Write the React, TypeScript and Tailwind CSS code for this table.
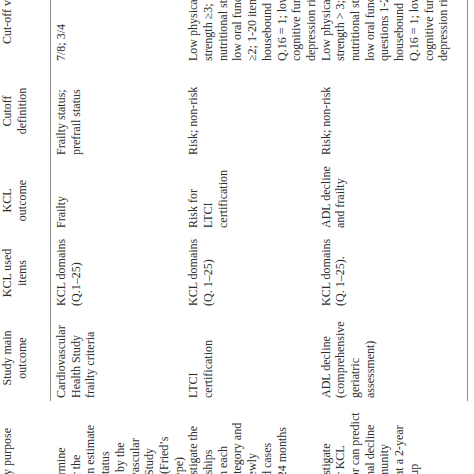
const HEADERS: string[][] = [
  ['Study purpose'],
  ['Study main', 'outcome'],
  ['KCL used', 'items'],
  ['KCL', 'outcome'],
  ['Cutoff', 'definition'],
  ['Cut-off value'],
]

const ROWS: string[][][] = [
  [
    ['To determine', 'whether the', 'KCL can estimate', 'frailty status', 'defined by the', 'Cardiovascular', 'Health Study', 'criteria (Fried\u2019s', 'phenotype)'],
    ['Cardiovascular', 'Health Study', 'frailty criteria'],
    ['KCL domains', '(Q.1\u201325)'],
    ['Frailty'],
    ['Frailty status;', 'prefrail status'],
    ['7/8; 3/4'],
  ],
  [
    ['To investigate the', 'relationships', 'between each', 'KCL category and', 'LTCI newly', 'certified cases', 'within 24 months'],
    ['LTCI', 'certification'],
    ['KCL domains', '(Q. 1\u201325)'],
    ['Risk for', 'LTCI', 'certification'],
    ['Risk; non-risk'],
    ['Low physical', 'strength \u22653;', 'nutritional status', 'low oral function', '\u22652; 1-20 items', 'housebound', 'Q.16 = 1; low', 'cognitive function', 'depression risk'],
  ],
  [
    ['To investigate', 'whether KCL', 'indicator can predict', 'functional decline', 'in community', 'people at a 2-year', 'follow-up'],
    ['ADL decline', '(comprehensive', 'geriatric', 'assessment)'],
    ['KCL domains', '(Q. 1\u201325).'],
    ['ADL decline', 'and frailty'],
    ['Risk; non-risk'],
    ['Low physical', 'strength > 3;', 'nutritional status', 'low oral function', 'questions 1-20', 'housebound', 'Q.16 = 1; low', 'cognitive function', 'depression risk'],
  ],
]

// right-hand spacing of each column, so centred headers sit over the text
const PAD = ['pr-[16px]', 'pr-[12px]', 'pr-[12px]', 'pr-[18px]', 'pr-[6px]', 'pr-[32px]']

function Lines({ lines }: { lines: string[] }) {
  return (
    <>
      {lines.map((l, i) => (
        <div key={i} className="whitespace-nowrap">{l}</div>
      ))}
    </>
  )
}

export default function App() {
  return (
    <div className="w-[474px] h-[474px] overflow-hidden bg-white">
      {/* the table is printed sideways in the source page */}
      <div className="w-[474px] h-[474px] -rotate-90">
        <div
          className="ml-[-39px] mt-[-2px] w-[580px] text-[12px] leading-[14.7px] text-[#2e2e2e]"
          style={{ fontFamily: '"Liberation Serif", "Times New Roman", serif' }}
        >
          <div className="grid grid-cols-[113px_92px_78px_73px_94px_130px] h-[50px]">
            {HEADERS.map((h, i) => (
              <div key={i} className={`text-center ${PAD[i]}`}>
                <Lines lines={h} />
              </div>
            ))}
          </div>
          <div className="ml-[110px] h-px bg-[#8c8c8c]" />
          <div className="mt-[3px]">
            {ROWS.map((row, r) => (
              <div key={r} className="grid grid-cols-[113px_92px_78px_73px_94px_130px]">
                {row.map((cell, c) => (
                  <div key={c} className={PAD[c]}>
                    <Lines lines={cell} />
                  </div>
                ))}
              </div>
            ))}
          </div>
          <div className="mt-[16px] ml-[110px] h-px bg-[#8c8c8c]" />
        </div>
      </div>
    </div>
  )
}
